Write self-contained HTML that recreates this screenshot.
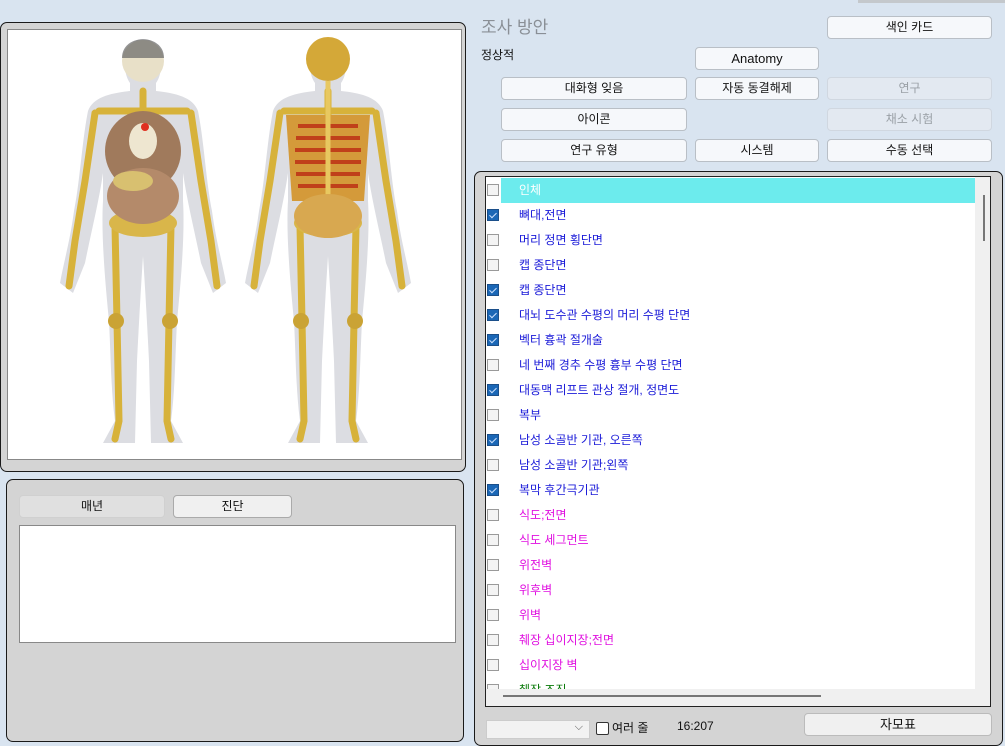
<!DOCTYPE html>
<html><head><meta charset="utf-8">
<style>
*{box-sizing:border-box;margin:0;padding:0}
body{width:1005px;height:744px;background:#d9e4f0;font-family:"Liberation Sans","Noto Sans CJK KR",sans-serif;font-size:12px;position:relative;overflow:hidden}
.abs{position:absolute}
.panel{position:absolute;background:#d4d4d4;border:1.5px solid #1a1a1a;border-radius:7px}
.btn{position:absolute;height:23px;background:#f6f8fb;border:1px solid #b9bfc6;border-radius:4px;text-align:center;line-height:21px;font-size:12px;color:#111}
.btn.dis{background:#e3e9f1;border-color:#d0d7e0;color:#9aa0a6}
.row{position:absolute;left:0;height:25px;width:490px}
.cb{position:absolute;left:1px;top:7px;width:12px;height:12px;border:1px solid #9a9a9a;background:#f4f4f4}
.cb.on{background:#1b67b6;border-color:#1b4f8a}
.cb.on::after{content:"";position:absolute;left:3px;top:1px;width:3px;height:6px;border:solid #cfe3ff;border-width:0 1px 1px 0;transform:rotate(45deg)}
.rt{position:absolute;left:33px;top:4px;font-size:12px;white-space:nowrap}
.b{color:#1a1ad8}.m{color:#e010e0}.g{color:#0a7a0a}
</style></head><body>
<div class="abs" style="left:858px;top:0;width:147px;height:3px;background:#c4c8cc"></div>
<!-- top-left panel -->
<div class="panel" style="left:0;top:22px;width:466px;height:450px"></div>
<div class="abs" style="left:7px;top:29px;width:455px;height:431px;background:#fff;border:1px solid #888">
<svg width="455" height="431" viewBox="7 29 455 431">
<defs>
<g id="body">
<path d="M0,38 C-20,38 -22,70 -13,82 L-13,90 C-32,92 -50,96 -55,110 C-61,140 -63,180 -69,210 C-73,240 -79,260 -83,282 L-70,292 L-58,262 C-52,232 -44,200 -40,172 L-40,200 C-42,232 -38,280 -34,320 C-32,360 -32,390 -28,420 L-40,442 L-8,442 L-6,360 C-4,320 -2,285 0,255 C2,285 4,320 6,360 L8,442 L40,442 L28,420 C32,390 32,360 34,320 C38,280 42,232 40,200 L40,172 C44,200 52,232 58,262 L70,292 L83,282 C79,260 73,240 69,210 C63,180 61,140 55,110 C50,96 32,92 13,90 L13,82 C22,70 20,38 0,38 Z" fill="#dcdde2"/>
<g stroke="#d7b23a" stroke-width="7" stroke-linecap="round" fill="none">
<path d="M-44,110 L44,110"/>
<path d="M-48,112 L-58,180 L-68,240 L-74,285"/>
<path d="M48,112 L58,180 L68,240 L74,285"/>
<path d="M-28,225 L-26,320 L-24,420 L-28,438"/>
<path d="M28,225 L26,320 L24,420 L28,438"/>
<path d="M0,90 L0,230"/>
</g>
<ellipse cx="0" cy="222" rx="34" ry="14" fill="#d9b64a"/>
<circle cx="-27" cy="320" r="8" fill="#caa335"/><circle cx="27" cy="320" r="8" fill="#caa335"/>
</g>
</defs>
<g transform="translate(142,0)">
<use href="#body"/>
<circle cx="0" cy="60" r="21" fill="#e8e0c8"/><path d="M-21,57 C-21,32 21,32 21,57" fill="#666" opacity=".7"/>
<ellipse cx="0" cy="150" rx="38" ry="40" fill="#a07a5c"/>
<ellipse cx="0" cy="140" rx="14" ry="18" fill="#eee6d0"/>
<circle cx="2" cy="126" r="4" fill="#e03020"/>
<ellipse cx="0" cy="195" rx="36" ry="28" fill="#b48a6a"/>
<ellipse cx="-10" cy="180" rx="20" ry="10" fill="#d8c070"/>
</g>
<g transform="translate(327,0)">
<use href="#body"/>
<circle cx="0" cy="58" r="22" fill="#d4a838"/>
<path d="M-42,114 L42,114 L36,200 L-36,200 Z" fill="#d49a3a"/>
<g stroke="#c0401a" stroke-width="4"><path d="M-30,125H30M-32,137H32M-33,149H33M-33,161H33M-32,173H32M-30,185H30"/></g>
<path d="M0,80V230" stroke="#e8c860" stroke-width="5"/>
<ellipse cx="0" cy="215" rx="34" ry="22" fill="#d8a850"/>
</g>
</svg>
</div>
<!-- bottom-left panel -->
<div class="panel" style="left:6px;top:479px;width:458px;height:263px"></div>
<div class="btn" style="left:19px;top:495px;width:146px;background:#e0e0e0;border-color:#d0d0d0">매년</div>
<div class="btn" style="left:173px;top:495px;width:119px;background:#f0f0f0;border-color:#aaa">진단</div>
<div class="abs" style="left:19px;top:525px;width:437px;height:118px;background:#fff;border:1px solid #888"></div>
<!-- top right -->
<div class="abs" style="left:481px;top:13px;font-size:17px;color:#8a8f96">조사 방안</div>
<div class="abs" style="left:481px;top:46px;font-size:12px;color:#111">정상적</div>
<div class="btn" style="left:827px;top:16px;width:165px">색인 카드</div>
<div class="btn" style="left:695px;top:47px;width:124px;font-size:13px">Anatomy</div>
<div class="btn" style="left:501px;top:77px;width:186px">대화형 잊음</div>
<div class="btn" style="left:695px;top:77px;width:124px">자동 동결해제</div>
<div class="btn dis" style="left:827px;top:77px;width:165px">연구</div>
<div class="btn" style="left:501px;top:108px;width:186px">아이콘</div>
<div class="btn dis" style="left:827px;top:108px;width:165px">채소 시험</div>
<div class="btn" style="left:501px;top:139px;width:186px">연구 유형</div>
<div class="btn" style="left:695px;top:139px;width:124px">시스템</div>
<div class="btn" style="left:827px;top:139px;width:165px">수동 선택</div>
<!-- right panel -->
<div class="panel" style="left:474px;top:171px;width:529px;height:575px"></div>
<div class="abs" style="left:485px;top:176px;width:506px;height:531px;background:#f0f0f0;border:1.5px solid #222;overflow:hidden">
 <div class="abs" style="left:0;top:0;width:489px;height:512px;background:#fff;overflow:hidden">
  <div class="abs" style="left:15px;top:1px;width:474px;height:25px;background:#6cebed"></div>
  <div class="row" style="top:0"><div class="cb"></div><div class="rt" style="color:#fff">인체</div></div>
  <div class="row" style="top:25px"><div class="cb on"></div><div class="rt b">뼈대,전면</div></div>
  <div class="row" style="top:50px"><div class="cb"></div><div class="rt b">머리 정면 횡단면</div></div>
  <div class="row" style="top:75px"><div class="cb"></div><div class="rt b">캡 종단면</div></div>
  <div class="row" style="top:100px"><div class="cb on"></div><div class="rt b">캡 종단면</div></div>
  <div class="row" style="top:125px"><div class="cb on"></div><div class="rt b">대뇌 도수관 수평의 머리 수평 단면</div></div>
  <div class="row" style="top:150px"><div class="cb on"></div><div class="rt b">벡터 흉곽 절개술</div></div>
  <div class="row" style="top:175px"><div class="cb"></div><div class="rt b">네 번째 경추 수평 흉부 수평 단면</div></div>
  <div class="row" style="top:200px"><div class="cb on"></div><div class="rt b">대동맥 리프트 관상 절개, 정면도</div></div>
  <div class="row" style="top:225px"><div class="cb"></div><div class="rt b">복부</div></div>
  <div class="row" style="top:250px"><div class="cb on"></div><div class="rt b">남성 소골반 기관, 오른쪽</div></div>
  <div class="row" style="top:275px"><div class="cb"></div><div class="rt b">남성 소골반 기관;왼쪽</div></div>
  <div class="row" style="top:300px"><div class="cb on"></div><div class="rt b">복막 후간극기관</div></div>
  <div class="row" style="top:325px"><div class="cb"></div><div class="rt m">식도;전면</div></div>
  <div class="row" style="top:350px"><div class="cb"></div><div class="rt m">식도 세그먼트</div></div>
  <div class="row" style="top:375px"><div class="cb"></div><div class="rt m">위전벽</div></div>
  <div class="row" style="top:400px"><div class="cb"></div><div class="rt m">위후벽</div></div>
  <div class="row" style="top:425px"><div class="cb"></div><div class="rt m">위벽</div></div>
  <div class="row" style="top:450px"><div class="cb"></div><div class="rt m">췌장 십이지장;전면</div></div>
  <div class="row" style="top:475px"><div class="cb"></div><div class="rt m">십이지장 벽</div></div>
  <div class="row" style="top:500px"><div class="cb"></div><div class="rt g">췌장 조직</div></div>
 </div>
 <div class="abs" style="left:497px;top:18px;width:2px;height:46px;background:#777"></div>
 <div class="abs" style="left:17px;top:518px;width:318px;height:2px;background:#777"></div>
</div>
<!-- bottom controls -->
<div class="abs" style="left:486px;top:720px;width:104px;height:19px;background:#f2f2f2;border:1px solid #ccc"><span class="abs" style="right:6px;top:0;font-size:11px;color:#555">⌵</span></div>
<div class="abs" style="left:596px;top:722px;width:13px;height:13px;border:1px solid #333;border-radius:2px;background:#fff"></div>
<div class="abs" style="left:612px;top:719px;font-size:12px;color:#111">여러 줄</div>
<div class="abs" style="left:677px;top:719px;font-size:12px;color:#111">16:207</div>
<div class="btn" style="left:804px;top:713px;width:188px;background:#f0f0f0;border-color:#bbb;font-size:13px">자모표</div>
</body></html>
